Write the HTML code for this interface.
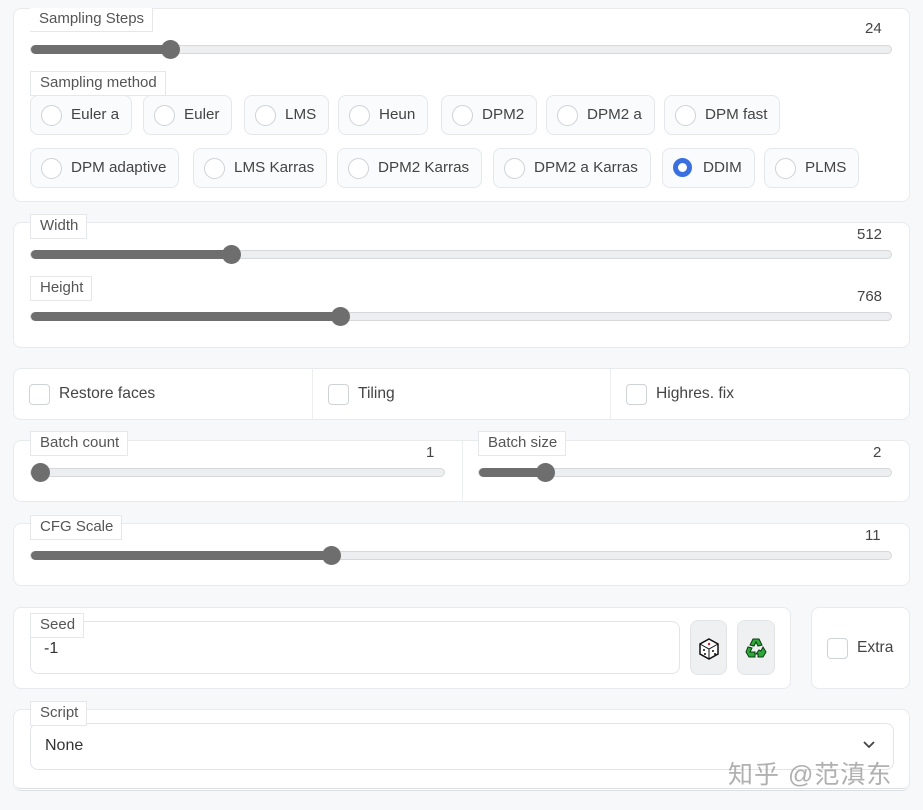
<!DOCTYPE html>
<html><head><meta charset="utf-8"><style>
*{box-sizing:border-box;margin:0;padding:0}
body{width:923px;height:810px;background:#f7f8fa;font-family:"Liberation Sans","Noto Sans CJK SC",sans-serif;color:#374151;position:relative;overflow:hidden}
.p{position:absolute;background:#fff;border:1px solid #e8eaee;border-radius:8px}
.lbl{position:absolute;background:#fff;border:1px solid #e5e7eb;border-top:none;border-left:none;font-size:15px;color:#555;padding:2px 8px 3px 9px;line-height:18px}
.tr{position:absolute;height:9px;background:#eceef0;border:1px solid #d6d8db;border-radius:5px}
.fill{position:absolute;left:0;top:-1px;height:9px;background:#6e6e6e;border-radius:5px}
.th{position:absolute;width:19px;height:19px;border-radius:50%;background:#6e6e6e;top:-6px;margin-left:-9px}
.val{position:absolute;font-size:15px;color:#444}
.r{position:absolute;height:40px;border:1px solid #e5e7eb;border-radius:8px;background:#fafbfc;font-size:15.2px;color:#444;padding:0 12px 0 40px;line-height:38px}
.r:before{content:"";position:absolute;left:10px;top:9px;width:19px;height:19px;border-radius:50%;border:1px solid #cfd2d6;background:#fff}
.r.on:before{border:5px solid #3b6fe0;width:19px;height:19px;box-sizing:border-box}
.cb{position:absolute;font-size:15.6px;color:#444;padding-left:30px;line-height:20px}
.cb:before{content:"";position:absolute;left:0;top:0;width:19px;height:19px;border:1px solid #cfd2d6;border-radius:4px;background:#fff}
</style></head><body>

<div class="p" style="left:13px;top:8px;width:897px;height:194px"></div>
<div class="lbl" style="left:30px;top:8px">Sampling Steps</div>
<div class="val" style="left:865px;top:20px">24</div>
<div class="tr" style="left:30px;top:45px;width:862px"><div class="fill" style="width:140px"></div><div class="th" style="left:139px"></div></div>
<div class="lbl" style="left:30px;top:71px;border-top:1px solid #e5e7eb;border-left:1px solid #e5e7eb">Sampling method</div>
<div class="r" style="left:30px;top:95px">Euler a</div>
<div class="r" style="left:143px;top:95px">Euler</div>
<div class="r" style="left:244px;top:95px">LMS</div>
<div class="r" style="left:338px;top:95px">Heun</div>
<div class="r" style="left:441px;top:95px">DPM2</div>
<div class="r" style="left:546px;top:95px">DPM2 a</div>
<div class="r" style="left:664px;top:95px">DPM fast</div>
<div class="r" style="left:30px;top:148px">DPM adaptive</div>
<div class="r" style="left:193px;top:148px">LMS Karras</div>
<div class="r" style="left:337px;top:148px">DPM2 Karras</div>
<div class="r" style="left:493px;top:148px">DPM2 a Karras</div>
<div class="r on" style="left:662px;top:148px">DDIM</div>
<div class="r" style="left:764px;top:148px">PLMS</div>

<div class="p" style="left:13px;top:222px;width:897px;height:126px"></div>
<div class="lbl" style="left:30px;top:214px;border-top:1px solid #e5e7eb;border-left:1px solid #e5e7eb">Width</div>
<div class="val" style="left:857px;top:226px">512</div>
<div class="tr" style="left:30px;top:250px;width:862px"><div class="fill" style="width:200px"></div><div class="th" style="left:200px"></div></div>
<div class="lbl" style="left:30px;top:276px;border-top:1px solid #e5e7eb;border-left:1px solid #e5e7eb">Height</div>
<div class="val" style="left:857px;top:288px">768</div>
<div class="tr" style="left:30px;top:312px;width:862px"><div class="fill" style="width:309px"></div><div class="th" style="left:309px"></div></div>

<div class="p" style="left:13px;top:368px;width:897px;height:52px"></div>
<div style="position:absolute;left:312px;top:369px;width:1px;height:50px;background:#eceef0"></div>
<div style="position:absolute;left:610px;top:369px;width:1px;height:50px;background:#eceef0"></div>
<div class="cb" style="left:29px;top:384px">Restore faces</div>
<div class="cb" style="left:328px;top:384px">Tiling</div>
<div class="cb" style="left:626px;top:384px">Highres. fix</div>

<div class="p" style="left:13px;top:440px;width:897px;height:62px"></div>
<div style="position:absolute;left:462px;top:441px;width:1px;height:60px;background:#eceef0"></div>
<div class="lbl" style="left:30px;top:431px;border-top:1px solid #e5e7eb;border-left:1px solid #e5e7eb">Batch count</div>
<div class="val" style="left:426px;top:444px">1</div>
<div class="tr" style="left:30px;top:468px;width:415px"><div class="th" style="left:9px"></div></div>
<div class="lbl" style="left:478px;top:431px;border-top:1px solid #e5e7eb;border-left:1px solid #e5e7eb">Batch size</div>
<div class="val" style="left:873px;top:444px">2</div>
<div class="tr" style="left:478px;top:468px;width:414px"><div class="fill" style="width:66px"></div><div class="th" style="left:66px"></div></div>

<div class="p" style="left:13px;top:523px;width:897px;height:63px"></div>
<div class="lbl" style="left:30px;top:515px;border-top:1px solid #e5e7eb;border-left:1px solid #e5e7eb">CFG Scale</div>
<div class="val" style="left:865px;top:527px">11</div>
<div class="tr" style="left:30px;top:551px;width:862px"><div class="fill" style="width:300px"></div><div class="th" style="left:300px"></div></div>

<div class="p" style="left:13px;top:607px;width:778px;height:82px"></div>
<div class="p" style="left:30px;top:621px;width:650px;height:53px;border-color:#e2e4e8"></div>
<div class="lbl" style="left:30px;top:613px;border-top:1px solid #e5e7eb;border-left:1px solid #e5e7eb">Seed</div>
<div style="position:absolute;left:44px;top:640px;font-size:16px;color:#333">-1</div>
<div style="position:absolute;left:690px;top:620px;width:37px;height:55px;border-radius:8px;background:#eef0f2;border:1px solid #e2e4e8;font-size:22px;text-align:center;line-height:53px">
<svg width="22" height="22" viewBox="0 0 22 22" style="vertical-align:middle"><path d="M11 1 L20 6 L20 16 L11 21 L2 16 L2 6 Z" fill="#fff" stroke="#111" stroke-width="1.5"/><path d="M2 6 L11 11 L20 6 M11 11 L11 21" fill="none" stroke="#111" stroke-width="1"/><circle cx="11" cy="6" r="1.2" fill="#c22"/><circle cx="6" cy="12" r="1" fill="#111"/><circle cx="7" cy="16" r="1" fill="#111"/><circle cx="15" cy="13" r="1" fill="#111"/><circle cx="17" cy="16" r="1" fill="#111"/></svg></div>
<div style="position:absolute;left:737px;top:620px;width:38px;height:55px;border-radius:8px;background:#eef0f2;border:1px solid #e2e4e8;text-align:center;line-height:53px">
<svg width="22" height="22" viewBox="0 0 22 22" style="vertical-align:middle"><path d="M8 2 L14 2 L17 8 L13 9 L11 5 L9 9 L5 8 Z M3 10 L7 11 L5 15 L10 15 L10 20 L4 20 L1 15 Z M18 10 L21 15 L18 20 L13 20 L13 17 L11 17 L14 13 L16 14 Z" fill="#2ea83a" stroke="#0a3a0e" stroke-width="1"/></svg></div>

<div class="p" style="left:811px;top:607px;width:99px;height:82px"></div>
<div class="cb" style="left:827px;top:638px">Extra</div>

<div class="p" style="left:13px;top:709px;width:897px;height:82px;border-bottom:3px double #dcdee2"></div>
<div class="p" style="left:30px;top:723px;width:864px;height:47px;border-color:#e2e4e8"></div>
<div class="lbl" style="left:30px;top:701px;border-top:1px solid #e5e7eb;border-left:1px solid #e5e7eb">Script</div>
<div style="position:absolute;left:45px;top:737px;font-size:16px;color:#333">None</div>
<svg style="position:absolute;left:862px;top:740px" width="14" height="10" viewBox="0 0 14 10"><path d="M2 2 L7 7 L12 2" fill="none" stroke="#444" stroke-width="1.8"/></svg>
<div style="position:absolute;left:728px;top:755px;font-size:25px;color:rgba(150,150,150,0.75);letter-spacing:1px">知乎 @范滇东</div>
</body></html>
